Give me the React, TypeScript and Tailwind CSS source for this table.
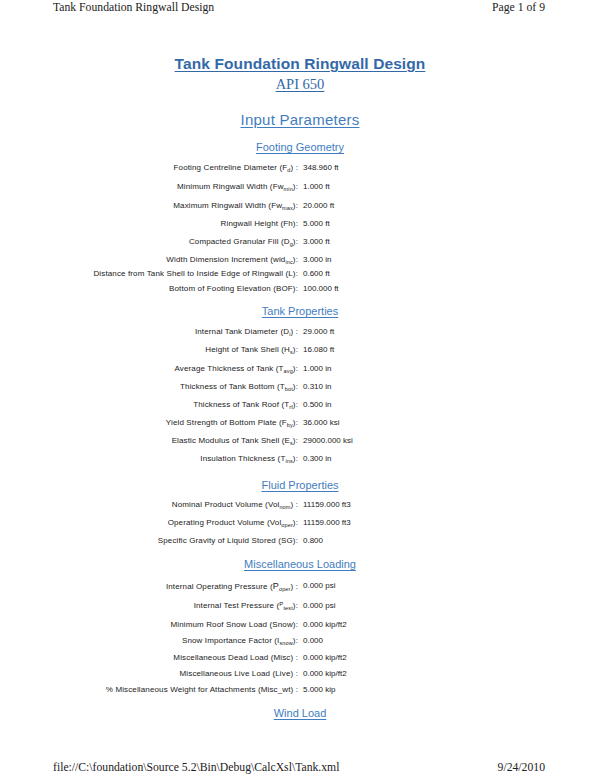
import React from "react";

type Row = { kind: "row"; label: React.ReactNode; value: string; c: number };
type Head = { kind: "head"; text: string; c: number };
type Item = Row | Head;

const S = ({ children }: { children: React.ReactNode }) => (
  <sub className="text-[5.5px] relative bottom-[-2px]">{children}</sub>
);

const items: Item[] = [
  { kind: "head", text: "Footing Geometry", c: 146 },
  { kind: "row", label: <>Footing Centreline Diameter (F<S>d</S>) :</>, value: "348.960 ft", c: 168 },
  { kind: "row", label: <>Minimum Ringwall Width (Fw<S>min</S>):</>, value: "1.000 ft", c: 187 },
  { kind: "row", label: <>Maximum Ringwall Width (Fw<S>max</S>):</>, value: "20.000 ft", c: 206 },
  { kind: "row", label: <>Ringwall Height (Fh):</>, value: "5.000 ft", c: 224 },
  { kind: "row", label: <>Compacted Granular Fill (D<S>g</S>):</>, value: "3.000 ft", c: 242 },
  { kind: "row", label: <>Width Dimension Increment (wid<S>inc</S>):</>, value: "3.000 in", c: 260 },
  { kind: "row", label: <>Distance from Tank Shell to Inside Edge of Ringwall (L):</>, value: "0.600 ft", c: 274 },
  { kind: "row", label: <>Bottom of Footing Elevation (BOF):</>, value: "100.000 ft", c: 289 },
  { kind: "head", text: "Tank Properties", c: 310 },
  { kind: "row", label: <>Internal Tank Diameter (D<S>i</S>) :</>, value: "29.000 ft", c: 332 },
  { kind: "row", label: <>Height of Tank Shell (H<S>s</S>):</>, value: "16.080 ft", c: 350 },
  { kind: "row", label: <>Average Thickness of Tank (T<S>avg</S>):</>, value: "1.000 in", c: 369 },
  { kind: "row", label: <>Thickness of Tank Bottom (T<S>bot</S>):</>, value: "0.310 in", c: 387 },
  { kind: "row", label: <>Thickness of Tank Roof (T<S>rf</S>):</>, value: "0.500 in", c: 405 },
  { kind: "row", label: <>Yield Strength of Bottom Plate (F<S>by</S>):</>, value: "36.000 ksi", c: 423 },
  { kind: "row", label: <>Elastic Modulus of Tank Shell (E<S>s</S>):</>, value: "29000.000 ksi", c: 441 },
  { kind: "row", label: <>Insulation Thickness (T<S>ins</S>):</>, value: "0.300 in", c: 459 },
  { kind: "head", text: "Fluid Properties", c: 484 },
  { kind: "row", label: <>Nominal Product Volume (Vol<S>nom</S>) :</>, value: "11159.000 ft3", c: 505 },
  { kind: "row", label: <>Operating Product Volume (Vol<S>oper</S>):</>, value: "11159.000 ft3", c: 523 },
  { kind: "row", label: <>Specific Gravity of Liquid Stored (SG):</>, value: "0.800", c: 541 },
  { kind: "head", text: "Miscellaneous Loading", c: 563 },
  { kind: "row", label: <>Internal Operating Pressure (<span className="text-[9px]">P</span><S>oper</S>) :</>, value: "0.000 psi", c: 586 },
  { kind: "row", label: <>Internal Test Pressure (<span className="text-[6px] relative top-[-2px]">P</span><S>test</S>):</>, value: "0.000 psi", c: 606 },
  { kind: "row", label: <>Minimum Roof Snow Load (Snow):</>, value: "0.000 kip/ft2", c: 625 },
  { kind: "row", label: <>Snow Importance Factor (I<S>snow</S>):</>, value: "0.000", c: 641 },
  { kind: "row", label: <>Miscellaneous Dead Load (Misc) :</>, value: "0.000 kip/ft2", c: 658 },
  { kind: "row", label: <>Miscellaneous Live Load (Live) :</>, value: "0.000 kip/ft2", c: 674 },
  { kind: "row", label: <>% Miscellaneous Weight for Attachments (Misc_wt) :</>, value: "5.000 kip", c: 690 },
  { kind: "head", text: "Wind Load", c: 712 },
];

export default function App() {
  const sans = { fontFamily: '"Liberation Sans", Arial, sans-serif' };
  const serif = { fontFamily: '"Liberation Serif", "Times New Roman", serif' };
  return (
    <div className="w-[600px] h-[776px] bg-white overflow-hidden flex flex-col text-[#222]">
      <div
        className="h-[16px] flex justify-between pl-[53px] pr-[55px] text-[11.7px] leading-[16px] text-[#222] shrink-0"
        style={serif}
      >
        <span>Tank Foundation Ringwall Design</span>
        <span>Page 1 of 9</span>
      </div>
      <div className="h-[42px] shrink-0" />
      <div className="h-[20px] leading-[12px] text-center shrink-0" style={sans}>
        <span className="text-[15.5px] font-bold text-[#3469a8] underline underline-offset-2 tracking-[0.1px]">
          Tank Foundation Ringwall Design
        </span>
      </div>
      <div className="h-[36px] leading-[12px] text-center shrink-0" style={serif}>
        <span className="text-[14.5px] text-[#3469a8] underline underline-offset-2">API 650</span>
      </div>
      <div className="h-[26px] leading-[12px] text-center shrink-0" style={sans}>
        <span className="text-[15px] text-[#3f7dc0] underline underline-offset-2 tracking-[0.25px]">
          Input Parameters
        </span>
      </div>
      {items.map((it, i) => {
        const next = i + 1 < items.length ? items[i + 1].c : it.c + 16;
        const h = next - it.c;
        if (it.kind === "head") {
          return (
            <div key={i} className="leading-[12px] text-center shrink-0" style={{ ...sans, height: h }}>
              <span className="text-[11px] text-[#3f7dc0] underline underline-offset-2">{it.text}</span>
            </div>
          );
        }
        return (
          <div key={i} className="flex leading-[12px] text-[8px] shrink-0" style={{ ...sans, height: h }}>
            <div className="w-[298px] shrink-0 text-right whitespace-nowrap tracking-[0.13px]">{it.label}</div>
            <div className="pl-[5px] whitespace-nowrap">{it.value}</div>
          </div>
        );
      })}
      <div className="flex-1" />
      <div
        className="h-[16px] flex justify-between pl-[53px] pr-[55px] text-[11.7px] leading-[16px] text-[#222] shrink-0"
        style={serif}
      >
        <span>file://C:\foundation\Source 5.2\Bin\Debug\CalcXsl\Tank.xml</span>
        <span>9/24/2010</span>
      </div>
    </div>
  );
}
